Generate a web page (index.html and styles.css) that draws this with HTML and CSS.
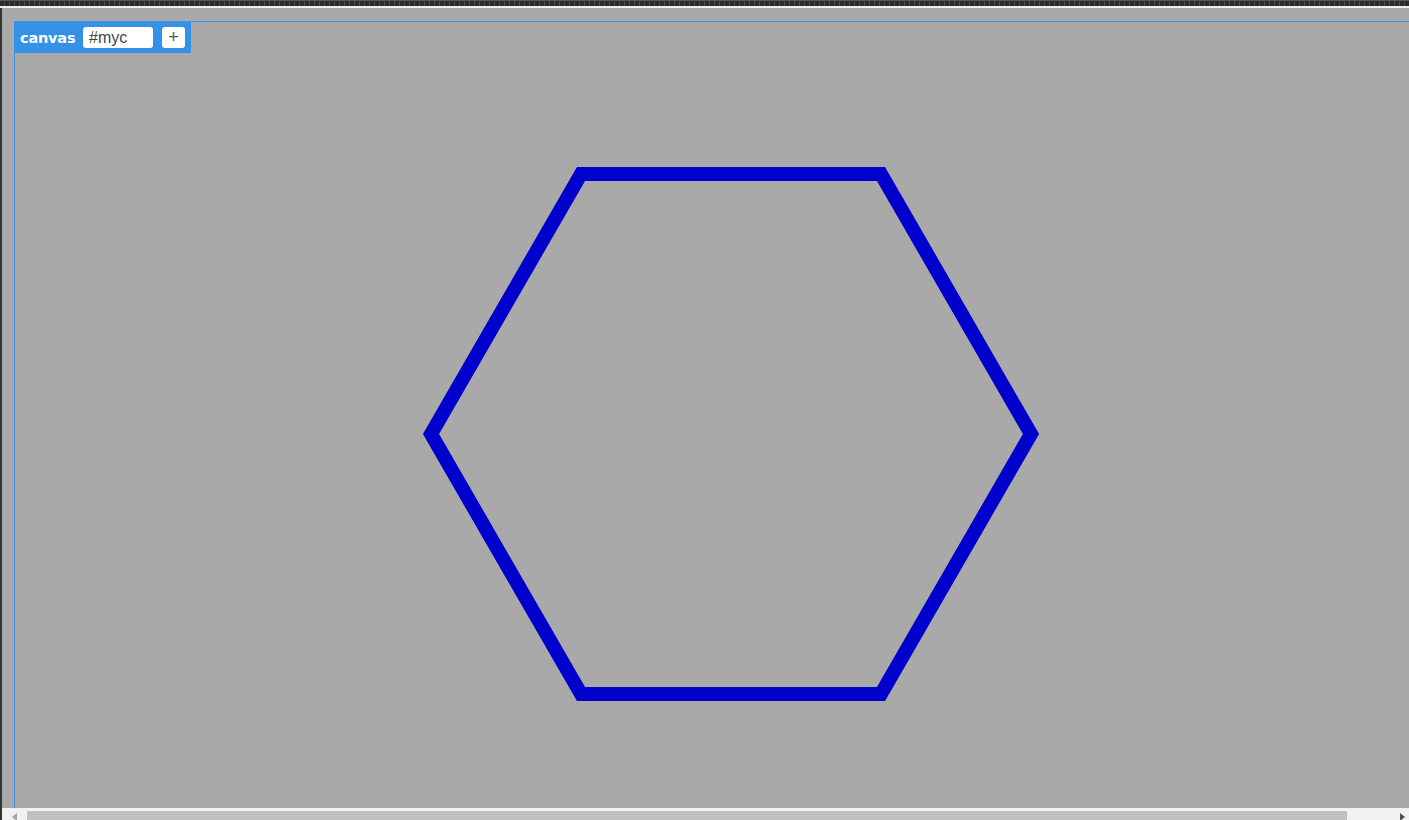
FILE: index.html
```html
<!DOCTYPE html>
<html>
<head>
<meta charset="utf-8">
<link rel="stylesheet" href="styles.css">
</head>
<body>
<div class="topbar"></div>
<div class="frame">
  <div class="leftedge"></div>
  <div class="viewport">
    <div class="scrollarea">
      <div class="stage">
        <div class="toolbar">
          <span class="tag">canvas</span>
          <span class="idbox">#myc</span>
          <span class="addbtn">+</span>
        </div>
        <svg class="drawing" viewBox="0 0 1394 786" width="1394" height="786">
          <polygon points="566,152 866,152 1016,412 866,672 566,672 416,412" fill="none" stroke="#0000cc" stroke-width="14" stroke-linejoin="miter"/>
        </svg>
      </div>
    </div>
    <div class="hscroll">
      <span class="arrow left"></span>
      <div class="track"><div class="thumb"></div></div>
      <span class="arrow right"></span>
    </div>
  </div>
</div>
</body>
</html>
```
FILE: styles.css
```css
html, body {
  margin: 0;
  padding: 0;
  width: 1409px;
  height: 820px;
  overflow: hidden;
  background: #a9a9a9;
  font-family: "Liberation Sans", Arial, sans-serif;
}
.topbar {
  box-sizing: border-box;
  height: 8px;
  background: repeating-linear-gradient(90deg, #2a2a2a 0 4px, #4a4a4a 4px 5px);
  border-top: 1px solid #555;
  border-bottom: 2px solid #eeeeee;
}
.frame {
  display: flex;
  height: 812px;
}
.leftedge {
  width: 2px;
  background: #333;
  flex: none;
}
.viewport {
  flex: 1;
  display: flex;
  flex-direction: column;
  background: #a9a9a9;
}
.scrollarea {
  flex: 1;
  padding: 13px 0 0 12px;
  overflow: hidden;
}
.stage {
  position: relative;
  border-left: 1px solid #3a8ee6;
  border-top: 1px solid #4a90e2;
  height: 100%;
  box-sizing: border-box;
  background: #a9a9a9;
}
.drawing {
  display: block;
}
.toolbar {
  position: absolute;
  left: -1px;
  top: 0;
  width: 177px;
  height: 31px;
  background: #3391e8;
  display: flex;
  align-items: center;
  padding-left: 6px;
  box-sizing: border-box;
}
.tag {
  color: #fff;
  font-family: "DejaVu Sans", Verdana, sans-serif;
  font-weight: bold;
  font-size: 14.5px;
  letter-spacing: -0.2px;
  width: 57px;
  margin-right: 6px;
  white-space: nowrap;
}
.idbox {
  background: #fff;
  width: 70px;
  height: 21px;
  border-radius: 3px;
  box-sizing: border-box;
  padding-left: 6px;
  font-size: 16px;
  line-height: 21px;
  color: #444;
}
.addbtn {
  background: #fff;
  width: 23px;
  height: 21px;
  border-radius: 3px;
  margin-left: 9px;
  display: flex;
  align-items: center;
  justify-content: center;
  color: #555;
  font-size: 18px;
  line-height: 21px;
}
.hscroll {
  height: 12px;
  background: #f1f1f1;
  display: flex;
  align-items: center;
  flex: none;
}
.arrow {
  width: 14px;
  height: 12px;
  flex: none;
  position: relative;
}
.arrow.left {
  width: 25px;
}
.arrow.left::after {
  content: "";
  position: absolute;
  left: 10px;
  top: 5px;
  border-right: 5px solid #a3a3a3;
  border-top: 4px solid transparent;
  border-bottom: 4px solid transparent;
}
.arrow.right::after {
  content: "";
  position: absolute;
  left: 5px;
  top: 5px;
  border-left: 5px solid #505050;
  border-top: 4px solid transparent;
  border-bottom: 4px solid transparent;
}
.track {
  flex: 1;
  height: 12px;
  display: flex;
  align-items: flex-end;
  padding-right: 48px;
}
.thumb {
  height: 9px;
  background: #c1c1c1;
  width: 100%;
}
```
